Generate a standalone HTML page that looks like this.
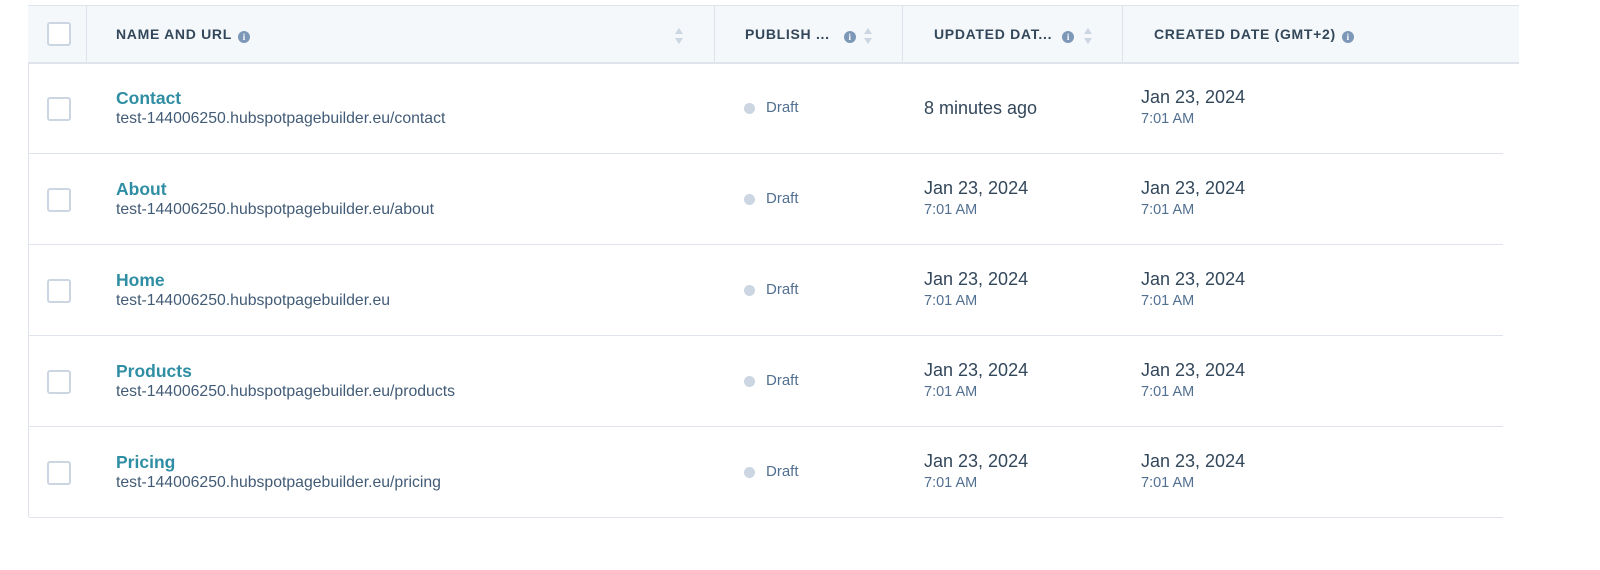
<!DOCTYPE html>
<html><head><style>
body{margin:0;width:1600px;height:570px;background:#fff;font-family:"Liberation Sans",sans-serif;position:relative;overflow:hidden;color:#33475b}
.hdr{position:absolute;left:28px;top:5px;width:1491px;height:56px;background:#f5f8fa;border-top:1px solid #dfe3eb;border-bottom:2px solid #dfe3eb}
.vl{position:absolute;top:0;width:1px;height:56px;background:#dfe3eb}
.ht{position:absolute;top:20px;font-size:14px;font-weight:bold;letter-spacing:.7px;color:#33475b;white-space:nowrap}
.info{display:inline-block;width:12px;height:12px;border-radius:50%;background:#7c98b6;color:#fff;font-size:9px;line-height:12px;text-align:center;vertical-align:-1px;margin-left:6px;font-family:"Liberation Serif",serif;font-weight:bold;letter-spacing:0}
.sort{position:absolute;top:22px;width:8px;height:18px}
.sort:before{content:"";position:absolute;left:0;top:0;border-left:4px solid transparent;border-right:4px solid transparent;border-bottom:6px solid #cbd6e2}
.sort:after{content:"";position:absolute;left:0;top:10px;border-left:4px solid transparent;border-right:4px solid transparent;border-top:6px solid #cbd6e2}
.cb{position:absolute;left:47px;width:20px;height:20px;border:2px solid #cbd6e2;border-radius:3px;background:#fff}
.body{position:absolute;left:28px;top:63px;width:1474px;height:454px;border-left:1px solid #dfe3eb}
.row{position:absolute;left:0;width:1474px;height:90px;border-bottom:1px solid #dfe3eb}
.t{position:absolute;left:87px;top:25px;font-size:17.5px;font-weight:bold;color:#2f8ea3}
.u{position:absolute;left:87px;top:47px;font-size:15.8px;color:#425b76}
.dot{position:absolute;left:715px;top:40px;width:11px;height:11px;border-radius:50%;background:#cbd6e2}
.dr{position:absolute;left:737px;top:36px;font-size:15px;color:#516f90}
.d1{position:absolute;top:24px;font-size:18px;color:#33475b}
.d2{position:absolute;top:48px;font-size:14.5px;color:#516f90}
</style></head><body>
<div class="hdr">
<div class="vl" style="left:58px"></div>
<div class="vl" style="left:686px"></div>
<div class="vl" style="left:874px"></div>
<div class="vl" style="left:1094px"></div>
<div class="ht" style="left:88px">NAME AND URL<span class="info">i</span></div>
<div class="sort" style="left:647px"></div>
<div class="ht" style="left:717px">PUBLISH ...<span class="info" style="margin-left:14px">i</span></div>
<div class="sort" style="left:836px"></div>
<div class="ht" style="left:906px">UPDATED DAT...<span class="info" style="margin-left:10px">i</span></div>
<div class="sort" style="left:1056px"></div>
<div class="ht" style="left:1126px">CREATED DATE (GMT+2)<span class="info">i</span></div>
</div>
<div class="cb" style="top:22px"></div>
<div class="body">
<div class="row" style="top:0"><div class="t">Contact</div><div class="u">test-144006250.hubspotpagebuilder.eu/contact</div><div class="dot"></div><div class="dr">Draft</div><div class="d1" style="left:895px;top:35px">8 minutes ago</div><div class="d1" style="left:1112px">Jan 23, 2024</div><div class="d2" style="left:1112px">7:01 AM</div></div>
<div class="row" style="top:91px"><div class="t">About</div><div class="u">test-144006250.hubspotpagebuilder.eu/about</div><div class="dot"></div><div class="dr">Draft</div><div class="d1" style="left:895px">Jan 23, 2024</div><div class="d2" style="left:895px">7:01 AM</div><div class="d1" style="left:1112px">Jan 23, 2024</div><div class="d2" style="left:1112px">7:01 AM</div></div>
<div class="row" style="top:182px"><div class="t">Home</div><div class="u">test-144006250.hubspotpagebuilder.eu</div><div class="dot"></div><div class="dr">Draft</div><div class="d1" style="left:895px">Jan 23, 2024</div><div class="d2" style="left:895px">7:01 AM</div><div class="d1" style="left:1112px">Jan 23, 2024</div><div class="d2" style="left:1112px">7:01 AM</div></div>
<div class="row" style="top:273px"><div class="t">Products</div><div class="u">test-144006250.hubspotpagebuilder.eu/products</div><div class="dot"></div><div class="dr">Draft</div><div class="d1" style="left:895px">Jan 23, 2024</div><div class="d2" style="left:895px">7:01 AM</div><div class="d1" style="left:1112px">Jan 23, 2024</div><div class="d2" style="left:1112px">7:01 AM</div></div>
<div class="row" style="top:364px"><div class="t">Pricing</div><div class="u">test-144006250.hubspotpagebuilder.eu/pricing</div><div class="dot"></div><div class="dr">Draft</div><div class="d1" style="left:895px">Jan 23, 2024</div><div class="d2" style="left:895px">7:01 AM</div><div class="d1" style="left:1112px">Jan 23, 2024</div><div class="d2" style="left:1112px">7:01 AM</div></div>
</div>
<div class="cb" style="top:97px"></div>
<div class="cb" style="top:188px"></div>
<div class="cb" style="top:279px"></div>
<div class="cb" style="top:370px"></div>
<div class="cb" style="top:461px"></div>
</body></html>
